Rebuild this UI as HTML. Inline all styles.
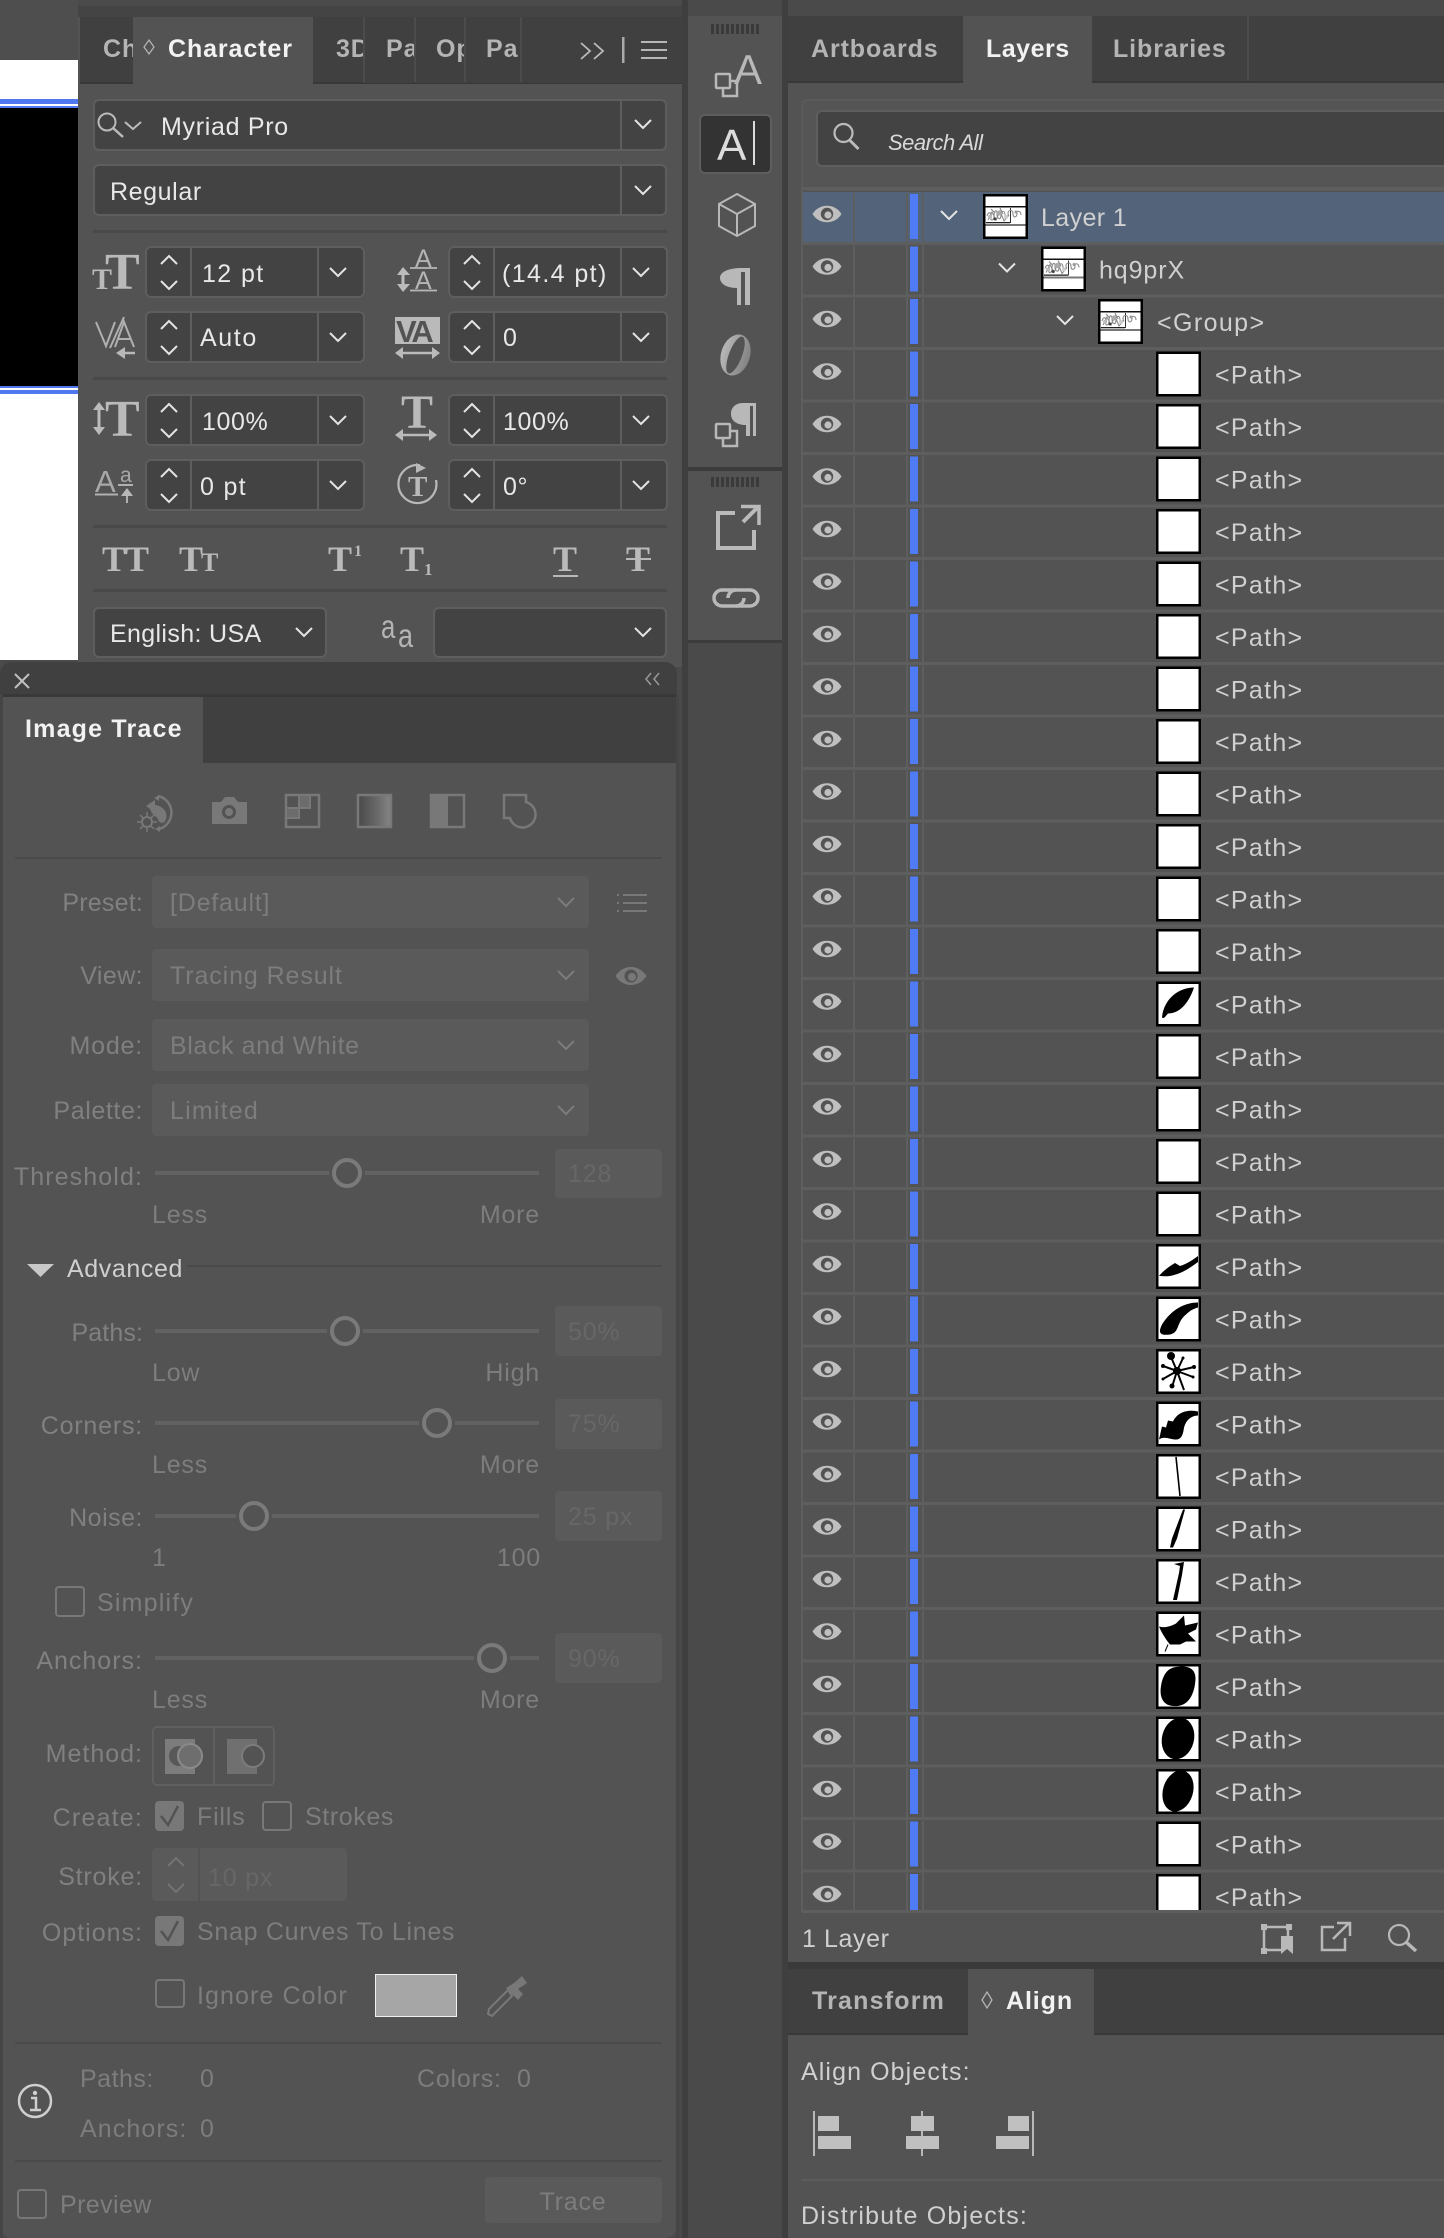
<!DOCTYPE html>
<html><head><meta charset="utf-8"><title>Illustrator panels</title>
<style>
html,body{margin:0;padding:0;background:#4b4b4b}
svg{display:block}
text{font-family:"Liberation Sans",sans-serif;font-size:25px;letter-spacing:.6px;fill:#e8e8e8}
.tb{font-weight:bold;fill:#b4b4b4;letter-spacing:.9px}
.ta{font-weight:bold;fill:#f2f2f2;letter-spacing:.9px}
.l{fill:#808080;text-anchor:end;letter-spacing:.8px}
.d{fill:#808080;letter-spacing:.8px}
.v{fill:#7d7d7d;letter-spacing:.8px}
.x{fill:#676767;letter-spacing:.8px}
.p{fill:#d0d0d0;letter-spacing:1.3px}
.s{font-family:"Liberation Serif",serif;font-weight:bold;fill:#bababa;letter-spacing:0}
.ic{fill:none;stroke:#b8b8b8;stroke-width:2}
.icd{fill:none;stroke:#787878;stroke-width:2.5}
</style></head>
<body>
<svg width="1444" height="2238" viewBox="0 0 1444 2238" xmlns="http://www.w3.org/2000/svg">
<defs>
<g id="ch"><path d="M-8 -4L0 4L8 -4" fill="none" stroke="#e4e4e4" stroke-width="2"/></g>
<g id="chd"><path d="M-8 -4L0 4L8 -4" fill="none" stroke="#7c7c7c" stroke-width="2"/></g>
<g id="ctl">
<rect x="0" y="-25" width="218" height="50" rx="5" fill="#434343" stroke="#5e5e5e" stroke-width="2"/>
<rect x="44" y="-24" width="2" height="48" fill="#5e5e5e"/><rect x="171" y="-24" width="2" height="48" fill="#5e5e5e"/>
<path d="M15 -8L23 -16L31 -8M15 9L23 17L31 9" fill="none" stroke="#e4e4e4" stroke-width="2"/>
<use href="#ch" x="192" y="0"/>
</g>
<g id="eye"><path d="M-14.500 0C-8 -11 8 -11 14.500 0C8 11 -8 11 -14.500 0Z" fill="#bfbfbf"/><circle r="6.2" fill="#535353"/><circle cx="1" cy="1" r="3.6" fill="#bfbfbf"/></g>
<g id="r">
<rect x="802" y="48" width="642" height="3" fill="#5e5e5e"/>
<rect x="853" y="-1" width="2" height="49" fill="#5e5e5e"/>
<rect x="906" y="-1" width="2" height="49" fill="#5e5e5e"/>
<rect x="922" y="-1" width="2" height="49" fill="#5e5e5e"/>
<rect x="910" y="0" width="8" height="45" fill="#4f7bf5"/>
<use href="#eye" x="827" y="20"/>
</g>
<g id="w"><rect width="45" height="45" fill="#000"/><rect x="2.5" y="2.500" width="40" height="40" fill="#fff"/></g>
<g id="lay"><rect width="45" height="45" fill="#000"/><rect x="2.5" y="2.500" width="40" height="40" fill="#fff"/>
<rect x="2.5" y="12" width="40" height="1.5" fill="#111"/><rect x="2.5" y="30" width="40" height="2" fill="#777"/>
<rect x="3" y="28" width="24" height="1.3" fill="#222"/><rect x="27" y="14" width="1" height="15" fill="#333"/>
<path d="M4 22C6 16 9 19 8 24C7 27 11 27 11 22C11 16 14 15 14 20C14 25 18 27 18 21C18 16 22 16 22 21C22 26 26 24 25 19C25 16 30 15 30 20C30 24 34 24 34 19C34 16 38 17 38 21M5 26L9 18L13 26L17 17L21 27L26 21M8 15L12 19M17 14L20 20" fill="none" stroke="#8a8a8a" stroke-width="1.1"/>
<circle cx="7" cy="23" r="2" fill="#bbb"/><circle cx="16" cy="19" r="2.500" fill="#aaa"/><circle cx="23" cy="23" r="2" fill="#ccc"/><circle cx="12" cy="25" r="1.500" fill="#444"/><circle cx="33" cy="18" r="1.500" fill="#999"/>
</g>
<g id="cp" fill="none" stroke="#b8b8b8" stroke-width="2.500"><rect x="0" y="0" width="14" height="14" rx="1"/><path d="M14 7H21V22H7V14"/></g>
<linearGradient id="gr"><stop offset="0" stop-color="#494949"/><stop offset=".6" stop-color="#6a6a6a"/><stop offset="1" stop-color="#868686"/></linearGradient>
<linearGradient id="og"><stop offset="0" stop-color="#b8b8b8"/><stop offset="1" stop-color="#828282"/></linearGradient>
</defs>

<rect width="1444" height="2238" fill="#4a4a4a"/>

<!-- document canvas -->
<rect x="0" y="0" width="78" height="60" fill="#4e4e4e"/>
<rect x="0" y="60" width="78" height="600" fill="#fff"/>
<rect x="0" y="99" width="78" height="5" fill="#4f78f0"/>
<rect x="0" y="106" width="78" height="3" fill="#4f78f0"/>
<rect x="0" y="108" width="78" height="278" fill="#000"/>
<rect x="0" y="386" width="78" height="2" fill="#4f78f0"/>
<rect x="0" y="390" width="78" height="4" fill="#4f78f0"/>

<!-- character panel -->
<rect x="78" y="6" width="604" height="11" fill="#444"/>
<rect x="78" y="17" width="604" height="650" fill="#535353"/>
<rect x="80" y="17" width="602" height="67" fill="#404040"/>
<rect x="80" y="82" width="602" height="2" fill="#383838"/>
<text class="tb" x="103" y="57">Ch</text>
<rect x="133" y="17" width="180" height="68" fill="#535353"/>
<path d="M149 40L154 47L149 54L144 47Z" fill="none" stroke="#b8b8b8" stroke-width="1.2"/>
<text class="ta" x="168" y="57">Character</text>
<text class="tb" x="336" y="57">3D</text>
<rect x="363" y="17" width="50" height="66" fill="#404040"/><rect x="363" y="17" width="2" height="65" fill="#4c4c4c"/>
<text class="tb" x="386" y="57">Pa</text>
<rect x="414" y="17" width="50" height="66" fill="#404040"/><rect x="414" y="17" width="2" height="65" fill="#4c4c4c"/>
<text class="tb" x="436" y="57">Op</text>
<rect x="464" y="17" width="56" height="66" fill="#404040"/><rect x="464" y="17" width="2" height="65" fill="#4c4c4c"/>
<text class="tb" x="486" y="57">Pan</text>
<rect x="520" y="17" width="162" height="66" fill="#404040"/><rect x="520" y="17" width="2" height="65" fill="#4c4c4c"/>
<path d="M581 43L590 51L581 59M594 43L603 51L594 59" fill="none" stroke="#bbb" stroke-width="1.8"/>
<rect x="622" y="37" width="2.500" height="26" fill="#aaa"/>
<path d="M641 42H667M641 50H667M641 58H667" stroke="#b8b8b8" stroke-width="2"/>

<rect x="94" y="100" width="572" height="50" rx="5" fill="#434343" stroke="#5e5e5e" stroke-width="2"/>
<rect x="620" y="100" width="2" height="50" fill="#5e5e5e"/>
<circle cx="107" cy="122" r="8.500" fill="none" stroke="#bbb" stroke-width="2"/><path d="M113 128L123 137" stroke="#bbb" stroke-width="2.500"/>
<path d="M125 122L133 129L141 122" fill="none" stroke="#bbb" stroke-width="2"/>
<text x="161" y="135" style="letter-spacing:.7px">Myriad Pro</text>
<use href="#ch" x="643" y="124"/>
<rect x="94" y="165" width="572" height="50" rx="5" fill="#434343" stroke="#5e5e5e" stroke-width="2"/>
<rect x="620" y="165" width="2" height="50" fill="#5e5e5e"/>
<text x="110" y="200">Regular</text>
<use href="#ch" x="643" y="190"/>
<rect x="93" y="230" width="574" height="3" fill="#494949"/>

<use href="#ctl" x="146" y="272"/><use href="#ctl" x="449" y="272"/>
<text x="202" y="282" style="letter-spacing:1.4px">12 pt</text><text x="502" y="282" style="letter-spacing:1.4px">(14.4 pt)</text>
<use href="#ctl" x="146" y="337"/><use href="#ctl" x="449" y="337"/>
<text x="200" y="346" style="letter-spacing:1.6px">Auto</text><text x="503" y="346">0</text>
<rect x="93" y="377" width="574" height="3" fill="#494949"/>
<use href="#ctl" x="146" y="420"/><use href="#ctl" x="449" y="420"/>
<text x="202" y="430">100%</text><text x="503" y="430">100%</text>
<use href="#ctl" x="146" y="485"/><use href="#ctl" x="449" y="485"/>
<text x="200" y="495" style="letter-spacing:1.3px">0 pt</text><text x="503" y="495">0°</text>
<rect x="93" y="525" width="574" height="3" fill="#494949"/>

<!-- char icons -->
<text class="s" x="92" y="289" style="font-size:30px">T</text>
<text class="s" x="105" y="289" style="font-size:52px">T</text>
<text x="415" y="267" style="font-size:25px;fill:#b4b4b4;letter-spacing:0">A</text>
<text x="415" y="289" style="font-size:25px;fill:#b4b4b4;letter-spacing:0">A</text>
<path d="M410 268H437M410 290.500H437" stroke="#b8b8b8" stroke-width="1.8"/>
<path d="M403 270V289" stroke="#bbb" stroke-width="3"/><path d="M397 275L403 267L410 275ZM397 284L403 292L410 284Z" fill="#bbb"/>
<path d="M96 322L106 346L115 322M110 348L124 317M115 347L124 322L134 347M118 339H130" fill="none" stroke="#b0b0b0" stroke-width="2"/>
<path d="M135 353H122" stroke="#b8b8b8" stroke-width="2.500"/><path d="M125 347L116 353L125 359Z" fill="#b8b8b8"/>
<rect x="395" y="317" width="45" height="27" fill="#bababa"/>
<text x="396" y="342" style="font-size:31px;font-weight:bold;fill:#535353;letter-spacing:-3px">VA</text>
<path d="M402 353H434" stroke="#bababa" stroke-width="2.500"/><path d="M403 347L395 353L403 359ZM432 347L440 353L432 359Z" fill="#bababa"/>
<text class="s" x="105" y="436" style="font-size:52px">T</text>
<path d="M99 406V431" stroke="#bbb" stroke-width="3"/><path d="M93 410L99 402L105 410ZM93 427L99 435L105 427Z" fill="#bbb"/>
<text class="s" x="401" y="428" style="font-size:48px">T</text>
<path d="M402 435H431" stroke="#bababa" stroke-width="2.500"/><path d="M403 429L395 435L403 441ZM429 429L437 435L429 441Z" fill="#bababa"/>
<text x="95" y="492" style="font-size:31px;fill:#a8a8a8;letter-spacing:0">A</text>
<text x="120" y="482" style="font-size:21px;fill:#a8a8a8;letter-spacing:0">a</text>
<path d="M95 494.500H118M118 485H133M127 503V493" stroke="#b0b0b0" stroke-width="2"/><path d="M121 496L127 488L133 496Z" fill="#b8b8b8"/>
<path d="M420 465.200A19 19 0 1 0 436 480" fill="none" stroke="#b8b8b8" stroke-width="2.200"/>
<path d="M416 463L426 468L416 473Z" fill="#b8b8b8"/>
<text class="s" x="408" y="496" style="font-size:29px">T</text>
<text class="s" x="102" y="571" style="font-size:36px;letter-spacing:-1px">TT</text>
<text class="s" x="179" y="571" style="font-size:36px">T</text><text class="s" x="201" y="571" style="font-size:26px">T</text>
<text class="s" x="328" y="571" style="font-size:36px">T</text><text class="s" x="354" y="556" style="font-size:16px">1</text>
<text class="s" x="400" y="571" style="font-size:36px">T</text><text class="s" x="424" y="575" style="font-size:17px">1</text>
<text class="s" x="553" y="571" style="font-size:36px">T</text><rect x="553" y="575" width="25" height="2" fill="#b8b8b8"/>
<text class="s" x="626" y="571" style="font-size:36px">T</text><rect x="626" y="558" width="25" height="2" fill="#b8b8b8"/>
<rect x="93" y="589" width="574" height="3" fill="#494949"/>

<rect x="94" y="608" width="232" height="49" rx="5" fill="#434343" stroke="#5e5e5e" stroke-width="2"/>
<text x="110" y="642" style="letter-spacing:.35px">English: USA</text>
<use href="#ch" x="304" y="632"/>
<text transform="translate(381,638) scale(.78,1)" style="font-size:33px;fill:#b4b4b4;letter-spacing:0">a</text>
<text transform="translate(398,647) scale(.82,1)" style="font-size:33px;fill:#b4b4b4;letter-spacing:0">a</text>
<rect x="434" y="608" width="232" height="49" rx="5" fill="#434343" stroke="#5e5e5e" stroke-width="2"/>
<use href="#ch" x="643" y="632"/>

<!-- toolbar column -->
<rect x="682" y="0" width="6" height="2238" fill="#3f3f3f"/>
<rect x="782" y="0" width="6" height="2238" fill="#3f3f3f"/>
<rect x="688" y="16" width="94" height="451" fill="#535353"/>
<rect x="688" y="467" width="94" height="4" fill="#3c3c3c"/>
<rect x="688" y="471" width="94" height="169" fill="#535353"/>
<rect x="688" y="640" width="94" height="3" fill="#3c3c3c"/>
<path d="M712.500 24v10M717.500 24v10M722.500 24v10M727.500 24v10M732.500 24v10M737.500 24v10M742.500 24v10M747.500 24v10M752.500 24v10M757.500 24v10M712.500 477v10M717.500 477v10M722.500 477v10M727.500 477v10M732.500 477v10M737.500 477v10M742.500 477v10M747.500 477v10M752.500 477v10M757.500 477v10" stroke="#3a3a3a" stroke-width="3"/>
<text x="734" y="84" style="font-size:42px;fill:#b8b8b8;letter-spacing:0">A</text>
<use href="#cp" x="716" y="74"/>
<rect x="700" y="115" width="71" height="58" rx="5" fill="#333" stroke="#5e5e5e" stroke-width="2"/>
<text x="717" y="160" style="font-size:44px;fill:#dcdcdc;letter-spacing:0">A</text>
<rect x="753" y="121" width="2" height="44" fill="#dcdcdc"/>
<path d="M737 194L755 204V226L737 236L719 226V204ZM719 204L737 214L755 204M737 214V236" class="ic"/>
<path d="M742 268H750V305H745V272H741V305H737V288C724 288 720 282 720 278C720 272 728 268 742 268Z" fill="#b8b8b8"/>
<ellipse transform="translate(735.500,355) rotate(17)" rx="14.500" ry="21" fill="url(#og)"/>
<ellipse transform="translate(735.500,355) rotate(21)" rx="6.500" ry="19.500" fill="#535353"/>
<path d="M743 403H756V436H753V406H750V436H746V425C737 425 731 421 731 414C731 407 736 403 743 403Z" fill="#b8b8b8"/>
<use href="#cp" x="716" y="424"/>
<path d="M735 513H718V548H754V530" fill="none" stroke="#bababa" stroke-width="4"/>
<path d="M743 522L757 508" fill="none" stroke="#bababa" stroke-width="4"/>
<path d="M741 506.500H759V525" fill="none" stroke="#bababa" stroke-width="3.500"/>
<path d="M736 590H722A8 8 0 0 0 722 606H736A8 8 0 0 0 744 598" fill="none" stroke="#b8b8b8" stroke-width="3.500"/>
<path d="M728 598A8 8 0 0 1 736 590H750A8 8 0 0 1 750 606H736" fill="none" stroke="#b8b8b8" stroke-width="3.500"/>

<!-- layers panel -->
<rect x="788" y="16" width="656" height="1946" fill="#535353"/>
<rect x="788" y="16" width="656" height="67" fill="#404040"/>
<rect x="788" y="81" width="656" height="2" fill="#383838"/>
<text class="tb" x="811" y="57">Artboards</text>
<rect x="963" y="16" width="129" height="68" fill="#535353"/>
<text class="ta" x="986" y="57" style="letter-spacing:.5px">Layers</text>
<text class="tb" x="1113" y="57">Libraries</text>
<rect x="1247" y="16" width="2" height="65" fill="#4c4c4c"/>

<rect x="802" y="100" width="660" height="90" fill="#555" stroke="#5a5a5a" stroke-width="2" rx="5"/>
<rect x="817" y="111" width="640" height="55" rx="5" fill="#434343" stroke="#5e5e5e" stroke-width="2"/>
<circle cx="843.500" cy="133" r="9" fill="none" stroke="#bbb" stroke-width="2.200"/><path d="M849.500 140L858.500 149" stroke="#bbb" stroke-width="3"/>
<text x="888" y="150" style="font-size:22px;font-style:italic;fill:#d8d8d8;letter-spacing:-.5px">Search All</text>

<rect x="802" y="187" width="642" height="3" fill="#5e5e5e"/>
<rect x="802" y="192" width="642" height="50" fill="#52637a"/>

<svg x="0" y="0" width="1444" height="1911" viewBox="0 0 1444 1911">
<g transform="translate(0,194)"><use href="#r"/><use href="#ch" x="949" y="21"/><use href="#lay" x="983"/><text class="p" x="1041" y="32" style="letter-spacing:.4px">Layer 1</text></g>
<g transform="translate(0,246.500)"><use href="#r"/><use href="#ch" x="1007" y="21"/><use href="#lay" x="1041"/><text class="p" x="1099" y="32" style="letter-spacing:.9px">hq9prX</text></g>
<g transform="translate(0,299)"><use href="#r"/><use href="#ch" x="1065" y="21"/><use href="#lay" x="1098"/><text class="p" x="1157" y="32" style="letter-spacing:1.4px">&lt;Group&gt;</text></g>
<g transform="translate(0,351.500)"><use href="#r"/><use href="#w" x="1156"/><text class="p" x="1215" y="32">&lt;Path&gt;</text></g>
<g transform="translate(0,404)"><use href="#r"/><use href="#w" x="1156"/><text class="p" x="1215" y="32">&lt;Path&gt;</text></g>
<g transform="translate(0,456.500)"><use href="#r"/><use href="#w" x="1156"/><text class="p" x="1215" y="32">&lt;Path&gt;</text></g>
<g transform="translate(0,509)"><use href="#r"/><use href="#w" x="1156"/><text class="p" x="1215" y="32">&lt;Path&gt;</text></g>
<g transform="translate(0,561.500)"><use href="#r"/><use href="#w" x="1156"/><text class="p" x="1215" y="32">&lt;Path&gt;</text></g>
<g transform="translate(0,614)"><use href="#r"/><use href="#w" x="1156"/><text class="p" x="1215" y="32">&lt;Path&gt;</text></g>
<g transform="translate(0,666.500)"><use href="#r"/><use href="#w" x="1156"/><text class="p" x="1215" y="32">&lt;Path&gt;</text></g>
<g transform="translate(0,719)"><use href="#r"/><use href="#w" x="1156"/><text class="p" x="1215" y="32">&lt;Path&gt;</text></g>
<g transform="translate(0,771.500)"><use href="#r"/><use href="#w" x="1156"/><text class="p" x="1215" y="32">&lt;Path&gt;</text></g>
<g transform="translate(0,824)"><use href="#r"/><use href="#w" x="1156"/><text class="p" x="1215" y="32">&lt;Path&gt;</text></g>
<g transform="translate(0,876.500)"><use href="#r"/><use href="#w" x="1156"/><text class="p" x="1215" y="32">&lt;Path&gt;</text></g>
<g transform="translate(0,929)"><use href="#r"/><use href="#w" x="1156"/><text class="p" x="1215" y="32">&lt;Path&gt;</text></g>
<g transform="translate(0,981.500)"><use href="#r"/><use href="#w" x="1156"/><path transform="translate(1156,0)" d="M38 6C24 6 8 16 6 36C8 38 10 34 12 32C22 32 32 24 38 6Z"/><text class="p" x="1215" y="32">&lt;Path&gt;</text></g>
<g transform="translate(0,1034)"><use href="#r"/><use href="#w" x="1156"/><text class="p" x="1215" y="32">&lt;Path&gt;</text></g>
<g transform="translate(0,1086.500)"><use href="#r"/><use href="#w" x="1156"/><text class="p" x="1215" y="32">&lt;Path&gt;</text></g>
<g transform="translate(0,1139)"><use href="#r"/><use href="#w" x="1156"/><text class="p" x="1215" y="32">&lt;Path&gt;</text></g>
<g transform="translate(0,1191.500)"><use href="#r"/><use href="#w" x="1156"/><text class="p" x="1215" y="32">&lt;Path&gt;</text></g>
<g transform="translate(0,1244)"><use href="#r"/><use href="#w" x="1156"/><path transform="translate(1156,0)" d="M3 32C8 26 14 22 19 19L24 22C31 20 38 15 42 12L42 18C34 24 26 29 18 31C12 33 7 32 3 32Z"/><text class="p" x="1215" y="32">&lt;Path&gt;</text></g>
<g transform="translate(0,1296.500)"><use href="#r"/><use href="#w" x="1156"/><path transform="translate(1156,0)" d="M42 6C30 6 16 12 6 28C1 38 6 39 14 38C24 36 20 26 30 18C34 14 38 12 42 11Z"/><text class="p" x="1215" y="32">&lt;Path&gt;</text></g>
<g transform="translate(0,1349)"><use href="#r"/><use href="#w" x="1156"/><g transform="translate(1156,0)"><path d="M21 22L15 8M21 22L27 9M21 22L38 18M21 22L37 28M21 22L28 41M21 22L16 38M21 22L7 30M21 22L7 17" stroke="#000" stroke-width="2"/><circle cx="21" cy="22" r="4"/><circle cx="15" cy="7" r="4"/><circle cx="27" cy="9" r="1.500"/><circle cx="38" cy="18" r="2"/><circle cx="37" cy="28" r="1.500"/><circle cx="16" cy="37" r="2.500"/><circle cx="7" cy="17" r="2"/><circle cx="7" cy="30" r="1.500"/></g><text class="p" x="1215" y="32">&lt;Path&gt;</text></g>
<g transform="translate(0,1401.500)"><use href="#r"/><use href="#w" x="1156"/><path transform="translate(1156,0)" d="M42 10C32 8 22 10 17 20L12 19L10 26L6 25L3 38C8 34 14 38 20 38C25 38 27 34 28 26C30 18 36 14 42 14Z"/><text class="p" x="1215" y="32">&lt;Path&gt;</text></g>
<g transform="translate(0,1454)"><use href="#r"/><use href="#w" x="1156"/><path transform="translate(1156,0)" d="M20 3L24 42" stroke="#000" stroke-width="1.600"/><text class="p" x="1215" y="32">&lt;Path&gt;</text></g>
<g transform="translate(0,1506.500)"><use href="#r"/><use href="#w" x="1156"/><path transform="translate(1156,0)" d="M29 3L27 3L16 32L14 41L17 41L21 32Z"/><text class="p" x="1215" y="32">&lt;Path&gt;</text></g>
<g transform="translate(0,1559)"><use href="#r"/><use href="#w" x="1156"/><path transform="translate(1156,0)" d="M18 5L28 3L26 16L21 41L17 41L23 14L24 7Z"/><text class="p" x="1215" y="32">&lt;Path&gt;</text></g>
<g transform="translate(0,1611.500)"><use href="#r"/><use href="#w" x="1156"/><g transform="translate(1156,0)"><path d="M3 15C10 17 16 14 20 12L28 4L29 14L42 11L40 18L32 22L40 30L30 30L24 33L14 33C10 28 6 22 3 15Z"/><path d="M12 33L9 40" stroke="#000" stroke-width="1"/></g><text class="p" x="1215" y="32">&lt;Path&gt;</text></g>
<g transform="translate(0,1664)"><use href="#r"/><use href="#w" x="1156"/><path transform="translate(1156,0)" d="M20 3C32 1 42 4 39 20C37 34 30 43 18 42C8 42 3 34 5 22C7 10 12 4 20 3Z"/><text class="p" x="1215" y="32">&lt;Path&gt;</text></g>
<g transform="translate(0,1716.500)"><use href="#r"/><use href="#w" x="1156"/><ellipse transform="translate(1178,22) rotate(14)" rx="16" ry="21"/><text class="p" x="1215" y="32">&lt;Path&gt;</text></g>
<g transform="translate(0,1769)"><use href="#r"/><use href="#w" x="1156"/><ellipse transform="translate(1178,22) rotate(17)" rx="15" ry="21"/><text class="p" x="1215" y="32">&lt;Path&gt;</text></g>
<g transform="translate(0,1821.500)"><use href="#r"/><use href="#w" x="1156"/><text class="p" x="1215" y="32">&lt;Path&gt;</text></g>
<g transform="translate(0,1874)"><use href="#r"/><use href="#w" x="1156"/><text class="p" x="1215" y="32">&lt;Path&gt;</text></g>
</svg>
<rect x="802" y="1910" width="642" height="3" fill="#5e5e5e"/>
<rect x="801" y="187" width="2" height="1725" fill="#5e5e5e"/>

<text class="p" x="802" y="1947" style="letter-spacing:.6px">1 Layer</text>
<path d="M1264 1927H1290M1264 1927V1950H1281M1288 1927V1937" class="ic" style="stroke-width:2.500"/>
<rect x="1261" y="1924" width="6" height="6" fill="#b8b8b8"/><rect x="1286" y="1924" width="6" height="6" fill="#b8b8b8"/><rect x="1261" y="1948" width="6" height="6" fill="#b8b8b8"/>
<path d="M1281 1936H1293V1954L1287 1949L1281 1954Z" fill="#b8b8b8"/>
<path d="M1334 1927H1322V1950H1345V1938" class="ic" style="stroke-width:2.500"/><path d="M1333 1939L1349 1923M1337 1923H1350V1936" class="ic" style="stroke-width:2.500"/>
<circle cx="1399" cy="1935" r="10" fill="none" stroke="#b8b8b8" stroke-width="2.200"/><path d="M1406 1942L1416 1951" stroke="#b8b8b8" stroke-width="3.500"/>

<!-- align panel -->
<rect x="788" y="1962" width="656" height="7" fill="#3a3a3a"/>
<rect x="788" y="1969" width="656" height="269" fill="#535353"/>
<rect x="788" y="1969" width="656" height="66" fill="#404040"/>
<rect x="788" y="2033" width="656" height="2" fill="#383838"/>
<text class="tb" x="812" y="2009" style="letter-spacing:1.2px">Transform</text>
<rect x="968" y="1969" width="126" height="67" fill="#535353"/>
<path d="M987 1992L992 2000L987 2008L982 2000Z" fill="none" stroke="#b8b8b8" stroke-width="1.200"/>
<text class="ta" x="1006" y="2009">Align</text>
<text class="p" x="801" y="2080" style="letter-spacing:1.1px">Align Objects:</text>
<rect x="813" y="2111" width="2" height="45" fill="#b8b8b8"/><rect x="818" y="2116" width="21" height="15" fill="#c0c0c0"/><rect x="818" y="2136" width="33" height="13" fill="#c0c0c0"/>
<rect x="921" y="2111" width="2" height="45" fill="#b8b8b8"/><rect x="911" y="2116" width="23" height="15" fill="#c0c0c0"/><rect x="906" y="2136" width="33" height="13" fill="#c0c0c0"/>
<rect x="1032" y="2111" width="2" height="45" fill="#b8b8b8"/><rect x="1008" y="2116" width="21" height="15" fill="#c0c0c0"/><rect x="996" y="2136" width="33" height="13" fill="#c0c0c0"/>
<rect x="801" y="2179" width="643" height="2" fill="#5c5c5c"/>
<text class="p" x="801" y="2224" style="letter-spacing:1.2px">Distribute Objects:</text>

<!-- image trace panel -->
<rect x="0" y="662" width="677" height="1576" rx="12" fill="#535353"/>
<path d="M0 694V674A12 12 0 0 1 12 662H665A12 12 0 0 1 677 674V694Z" fill="#404040"/>
<rect x="0" y="694" width="677" height="3" fill="#383838"/>
<rect x="3" y="697" width="673" height="66" fill="#404040"/>
<rect x="3" y="697" width="200" height="67" fill="#535353"/>
<rect x="0" y="694" width="3" height="1544" fill="#454545"/>
<rect x="676" y="694" width="3" height="1544" fill="#454545"/>
<path d="M15 674L29 688M29 674L15 688" stroke="#c0c0c0" stroke-width="2"/>
<path d="M651 673L646 679L651 685M659 673L654 679L659 685" fill="none" stroke="#999" stroke-width="1.500"/>
<text class="ta" x="25" y="737" style="letter-spacing:1.2px">Image Trace</text>

<path d="M158 796A17 17 0 0 1 159 829" fill="none" stroke="#787878" stroke-width="2.500"/>
<path d="M154 798L159 795V801ZM160 826L155 829L160 832Z" fill="#787878"/>
<path d="M146 806L155 800V805C163 806 168 812 166 819C165 824 160 824 158 820C158 814 152 810 146 806Z" fill="#787878"/>
<path d="M148 805C156 803 162 808 163 816L157 818L152 813Z" fill="#787878"/>
<circle cx="147" cy="822" r="5" fill="none" stroke="#787878" stroke-width="2"/>
<path d="M147 812V816M147 828V832M137 822H141M153 822H157M140 815L143 818M154 815L151 818M140 829L143 826M154 829L151 826" stroke="#787878" stroke-width="1.500"/>
<path d="M212 802H221L225 797H234L238 802H247V824H212Z" fill="#787878"/><circle cx="229" cy="812" r="7" fill="#535353"/><circle cx="229" cy="812" r="4" fill="#787878"/>
<rect x="286" y="795" width="33" height="32" class="icd"/>
<rect x="300" y="796" width="10" height="11" fill="#6c6c6c"/><rect x="287" y="809" width="11" height="8" fill="#6c6c6c"/>
<path d="M286 808H310V795M299 795V818H286" fill="none" stroke="#787878" stroke-width="2"/>
<rect x="358" y="795" width="33" height="32" fill="url(#gr)" stroke="#787878" stroke-width="2.500"/>
<rect x="431" y="795" width="33" height="32" class="icd"/><rect x="431" y="795" width="17" height="32" fill="#787878"/>
<path d="M504 795H526V802A13 13 0 1 1 510 818H504Z" class="icd"/>
<rect x="15" y="857" width="647" height="2" fill="#4a4a4a"/>

<rect x="152" y="876" width="437" height="52" rx="4" fill="#5a5a5a"/>
<text class="l" x="143" y="911" style="letter-spacing:.2px">Preset:</text><text class="v" x="170" y="911">[Default]</text><use href="#chd" x="566" y="902"/>
<path d="M617 895h2M617 903h2M617 911h2M623 895H647M623 903H647M623 911H647" stroke="#787878" stroke-width="2"/>
<rect x="152" y="949" width="437" height="52" rx="4" fill="#5a5a5a"/>
<text class="l" x="143" y="984" style="letter-spacing:.4px">View:</text><text class="v" x="170" y="984" style="letter-spacing:.9px">Tracing Result</text><use href="#chd" x="566" y="975"/>
<g transform="translate(631,976)"><path d="M-15.500 0C-8 -12 8 -12 15.500 0C8 12 -8 12 -15.500 0Z" fill="#787878"/><circle r="6.500" fill="#535353"/><circle cx="1" cy="1" r="4" fill="#787878"/></g>
<rect x="152" y="1019" width="437" height="52" rx="4" fill="#5a5a5a"/>
<text class="l" x="143" y="1054">Mode:</text><text class="v" x="170" y="1054" style="letter-spacing:.6px">Black and White</text><use href="#chd" x="566" y="1045"/>
<rect x="152" y="1084" width="437" height="52" rx="4" fill="#5a5a5a"/>
<text class="l" x="143" y="1119" style="letter-spacing:.6px">Palette:</text><text class="v" x="170" y="1119" style="letter-spacing:1.2px">Limited</text><use href="#chd" x="566" y="1110"/>

<text class="l" x="143" y="1185" style="letter-spacing:1.1px">Threshold:</text>
<rect x="155" y="1171" width="384" height="4" fill="#626262"/><circle cx="347" cy="1173" r="18" fill="#535353"/><circle cx="347" cy="1173" r="13" fill="#535353" stroke="#7a7a7a" stroke-width="4"/>
<rect x="555" y="1149" width="107" height="49" rx="4" fill="#5a5a5a"/><text class="x" x="568" y="1182">128</text>
<text class="v" x="152" y="1223">Less</text><text class="v" x="540" y="1223" text-anchor="end">More</text>

<path d="M27 1264H54L40.500 1277Z" fill="#c8c8c8"/>
<text x="67" y="1277" style="fill:#cfcfcf;letter-spacing:.6px">Advanced</text>
<rect x="187" y="1265" width="475" height="2" fill="#4a4a4a"/>

<text class="l" x="143" y="1341" style="letter-spacing:.1px">Paths:</text>
<rect x="155" y="1329" width="384" height="4" fill="#626262"/><circle cx="345" cy="1331" r="18" fill="#535353"/><circle cx="345" cy="1331" r="13" fill="#535353" stroke="#7a7a7a" stroke-width="4"/>
<rect x="555" y="1306" width="107" height="50" rx="4" fill="#5a5a5a"/><text class="x" x="568" y="1340">50%</text>
<text class="v" x="152" y="1381">Low</text><text class="v" x="540" y="1381" text-anchor="end">High</text>

<text class="l" x="143" y="1434">Corners:</text>
<rect x="155" y="1421" width="384" height="4" fill="#626262"/><circle cx="437" cy="1423" r="18" fill="#535353"/><circle cx="437" cy="1423" r="13" fill="#535353" stroke="#7a7a7a" stroke-width="4"/>
<rect x="555" y="1399" width="107" height="50" rx="4" fill="#5a5a5a"/><text class="x" x="568" y="1432">75%</text>
<text class="v" x="152" y="1473">Less</text><text class="v" x="540" y="1473" text-anchor="end">More</text>

<text class="l" x="143" y="1526" style="letter-spacing:.5px">Noise:</text>
<rect x="155" y="1514" width="384" height="4" fill="#626262"/><circle cx="254" cy="1516" r="18" fill="#535353"/><circle cx="254" cy="1516" r="13" fill="#535353" stroke="#7a7a7a" stroke-width="4"/>
<rect x="555" y="1491" width="107" height="50" rx="4" fill="#5a5a5a"/><text class="x" x="568" y="1525">25 px</text>
<text class="v" x="152" y="1566">1</text><text class="v" x="541" y="1566" text-anchor="end">100</text>

<rect x="56" y="1587" width="28" height="29" rx="3" fill="none" stroke="#787878" stroke-width="2"/>
<text class="v" x="97" y="1611" style="letter-spacing:1.2px">Simplify</text>

<text class="l" x="143" y="1669" style="letter-spacing:1px">Anchors:</text>
<rect x="155" y="1656" width="384" height="4" fill="#626262"/><circle cx="492" cy="1658" r="18" fill="#535353"/><circle cx="492" cy="1658" r="13" fill="#535353" stroke="#7a7a7a" stroke-width="4"/>
<rect x="555" y="1633" width="107" height="50" rx="4" fill="#5a5a5a"/><text class="x" x="568" y="1667">90%</text>
<text class="v" x="152" y="1708">Less</text><text class="v" x="540" y="1708" text-anchor="end">More</text>

<text class="l" x="143" y="1762" style="letter-spacing:1px">Method:</text>
<rect x="153" y="1727" width="121" height="58" rx="4" fill="none" stroke="#5f5f5f" stroke-width="2"/><rect x="213" y="1727" width="2" height="58" fill="#5f5f5f"/>
<rect x="165" y="1739" width="30" height="35" fill="#7c7c7c"/><circle cx="179" cy="1756" r="10" fill="#585858"/><circle cx="190" cy="1756" r="12" fill="#6e6e6e" stroke="#8a8a8a" stroke-width="2"/>
<rect x="227" y="1739" width="30" height="35" fill="#707070"/><circle cx="253" cy="1756" r="11" fill="#535353" stroke="#7c7c7c" stroke-width="2"/>

<text class="l" x="143" y="1826" style="letter-spacing:1.2px">Create:</text>
<rect x="155" y="1801" width="29" height="30" rx="4" fill="#787878"/><path d="M161 1816L168 1825L178 1806" fill="none" stroke="#535353" stroke-width="2.500"/>
<text class="v" x="197" y="1825">Fills</text>
<rect x="263" y="1802" width="28" height="28" rx="3" fill="none" stroke="#787878" stroke-width="2"/>
<text class="v" x="305" y="1825" style="letter-spacing:.6px">Strokes</text>

<text class="l" x="143" y="1885">Stroke:</text>
<rect x="152" y="1848" width="195" height="53" rx="4" fill="#5a5a5a"/><rect x="198" y="1848" width="2" height="53" fill="#535353"/>
<path d="M168 1866L176 1858L184 1866M168 1884L176 1892L184 1884" fill="none" stroke="#747474" stroke-width="2"/>
<text class="x" x="208" y="1886">10 px</text>

<text class="l" x="143" y="1941" style="letter-spacing:1px">Options:</text>
<rect x="155" y="1916" width="29" height="30" rx="4" fill="#787878"/><path d="M161 1931L168 1940L178 1921" fill="none" stroke="#535353" stroke-width="2.500"/>
<text class="v" x="197" y="1940" style="letter-spacing:.7px">Snap Curves To Lines</text>

<rect x="156" y="1980" width="28" height="27" rx="3" fill="none" stroke="#787878" stroke-width="2"/>
<text class="v" x="197" y="2004" style="letter-spacing:1.1px">Ignore Color</text>
<rect x="375.500" y="1974.500" width="81" height="42" fill="#a6a6a6" stroke="#f0f0f0" stroke-width="1"/>
<path d="M512 1996L492 2016L488 2014L489 2009L508 1990Z" fill="none" stroke="#787878" stroke-width="2"/>
<path d="M506 1988L518 2000L523 1994L518 1989L527 1983L522 1976L514 1983Z" fill="#787878"/>

<rect x="15" y="2042" width="647" height="2" fill="#4a4a4a"/>
<text class="v" x="80" y="2087" style="letter-spacing:.5px">Paths:</text><text class="v" x="200" y="2087">0</text>
<text class="v" x="417" y="2087">Colors:</text><text class="v" x="517" y="2087">0</text>
<text class="v" x="80" y="2137" style="letter-spacing:1.1px">Anchors:</text><text class="v" x="200" y="2137">0</text>
<circle cx="35" cy="2101" r="16" fill="none" stroke="#cfcfcf" stroke-width="2.500"/>
<circle cx="35" cy="2093" r="2.200" fill="#cfcfcf"/><path d="M31 2098H36V2109M30 2110H41" fill="none" stroke="#cfcfcf" stroke-width="2.500"/>
<rect x="15" y="2160" width="647" height="2" fill="#4a4a4a"/>
<rect x="18" y="2190" width="28" height="28" rx="3" fill="none" stroke="#787878" stroke-width="2"/>
<text class="v" x="60" y="2213" style="letter-spacing:.4px">Preview</text>
<rect x="485" y="2177" width="177" height="46" rx="4" fill="#5a5a5a"/>
<text class="v" x="573" y="2210" text-anchor="middle">Trace</text>
</svg>
</body></html>
